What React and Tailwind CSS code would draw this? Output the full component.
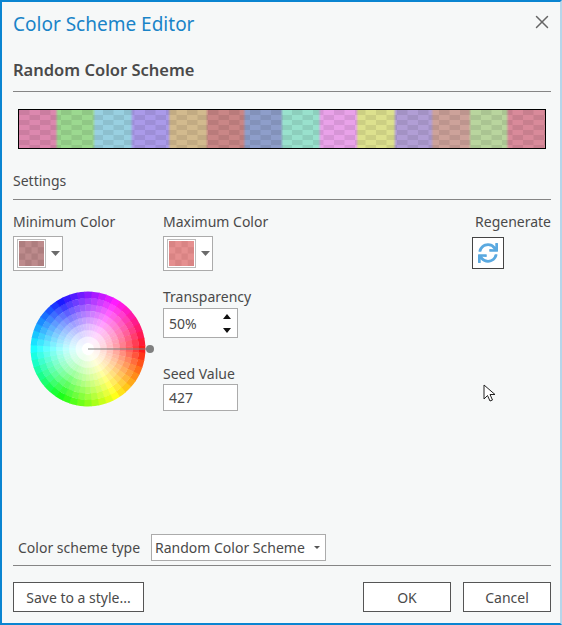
import React from 'react';
import { FaSync } from 'react-icons/fa';
import { X } from 'lucide-react';

const font = { fontFamily: '"Noto Sans", sans-serif' };

const stripColors = [
  '#dc88ae', '#9cd990', '#99d0e1', '#aa9ae9', '#d2ba8e', '#c98686', '#8e9eca',
  '#99e1cd', '#e9a2e9', '#dde18e', '#b19ed5', '#cda29a', '#b9d59e', '#d98a9a',
];

// ramp of colours under a 50% transparency checker
function ColorStrip() {
  const w = 526;
  const seg = w / stripColors.length;
  const stops = [];
  stripColors.forEach((c, i) => {
    stops.push(<stop key={`a${i}`} offset={(i * seg + (i ? 1.5 : 0)) / w} stopColor={c} />);
    stops.push(<stop key={`b${i}`} offset={((i + 1) * seg - 1.5) / w} stopColor={c} />);
  });
  return (
    <svg width="526" height="38" className="block">
      <defs>
        <linearGradient id="ramp">{stops}</linearGradient>
        <pattern id="check" width="21" height="10" patternUnits="userSpaceOnUse" x="0" y="0">
          <rect x="0" y="0" width="10.5" height="5" fill="rgba(0,0,0,0.08)" />
          <rect x="10.5" y="5" width="10.5" height="5" fill="rgba(0,0,0,0.08)" />
        </pattern>
      </defs>
      <rect width="526" height="38" fill="url(#ramp)" />
      <rect width="526" height="38" fill="url(#check)" />
    </svg>
  );
}

function hsl(h, s) {
  const l = 100 - s * 0.45;
  return `hsl(${h} 100% ${l}%)`;
}

function wedge(cx, cy, r0, r1, a0, a1) {
  const p = (r, a) => {
    const t = (a * Math.PI) / 180;
    return `${(cx + r * Math.cos(t)).toFixed(2)} ${(cy + r * Math.sin(t)).toFixed(2)}`;
  };
  return `M${p(r0, a0)} L${p(r1, a0)} A${r1} ${r1} 0 0 1 ${p(r1, a1)} L${p(r0, a1)} A${r0} ${r0} 0 0 0 ${p(r0, a0)}Z`;
}

function ColorWheel() {
  const rings = 8;
  const sectors = 48;
  const cells = [];
  for (let i = 0; i < rings; i++) {
    const r0 = 6 + i * 6.4;
    const r1 = r0 + 6.6;
    for (let j = 0; j < sectors; j++) {
      const a0 = (j * 360) / sectors - 3.75;
      const a1 = a0 + 360 / sectors + 0.6;
      const sat = Math.pow((i + 1) / rings, 1.25) * 100;
      cells.push(<path key={`${i}-${j}`} d={wedge(59, 59, r0, r1, a0, a1)} fill={hsl((j * 360) / sectors, sat)} />);
    }
  }
  return (
    <svg width="130" height="118" className="block">
      <circle cx="59" cy="59" r="7" fill="#fff" />
      {cells}
      <line x1="59" y1="59" x2="120" y2="59" stroke="#808080" strokeWidth="1.2" />
      <circle cx="121" cy="59" r="4" fill="#808080" />
    </svg>
  );
}

function SwatchButton({ a, b }) {
  return (
    <div className="flex items-center w-[50px] h-[35px] bg-white border border-[#ababab] pl-[3px]">
      <div className="border border-[#bcbcbc] p-px">
        <svg width="25" height="25" className="block">
          <rect width="25" height="25" fill={a} />
          {[0, 1, 2, 3].map((r) =>
            [0, 1, 2, 3].map((c) =>
              (r + c) % 2 === 0 ? <rect key={`${r}${c}`} x={c * 6.25} y={r * 6.25} width="6.25" height="6.25" fill={b} /> : null
            )
          )}
        </svg>
      </div>
      <svg width="9" height="5" className="ml-[5px]">
        <path d="M0 0H9L4.5 5Z" fill="#6b6b6b" />
      </svg>
    </div>
  );
}

function Button({ className, children }) {
  return (
    <button className={`h-[30px] pt-px bg-white border border-[#555] text-[14px] text-[#4a4a4a] ${className}`}>
      {children}
    </button>
  );
}

export default function App() {
  return (
    <div
      style={font}
      className="relative w-[562px] h-[625px] flex flex-col bg-[#f6f8f8] border-2 border-[#0a85d1] border-r-[#b6d6ea] pl-[11px] pr-[9px] text-[14px] leading-[19px] text-[#4a4a4a]"
    >
      <div className="flex items-center justify-between h-[44px]">
        <span className="text-[19px] text-[#1a84c8]">Color Scheme Editor</span>
        <X size={22} strokeWidth={1.6} className="text-[#666] mr-[-2px] mt-[-4px]" />
      </div>

      <div className="h-[46px] border-b border-[#858585] pt-[13px] text-[16.5px] leading-[22px] font-semibold">
        Random Color Scheme
      </div>

      <div className="ml-[5px] mt-[17px] w-[528px] border border-black">
        <ColorStrip />
      </div>

      <div className="mt-[22px] h-[29px] border-b border-[#858585]">Settings</div>

      <div className="flex mt-[12px]">
        <div className="w-[150px]">
          <div>Minimum Color</div>
          <div className="mt-[5px]">
            <SwatchButton a="#bd8b8c" b="#ae7e7f" />
          </div>
          <div className="mt-[19px] ml-[16px]">
            <ColorWheel />
          </div>
        </div>

        <div className="flex-1">
          <div>Maximum Color</div>
          <div className="mt-[5px]">
            <SwatchButton a="#e58f8f" b="#d98484" />
          </div>
          <div className="mt-[16px]">Transparency</div>
          <div className="mt-[2px] flex items-center justify-between w-[75px] h-[30px] bg-white border border-[#ababab] pl-[5px] pr-[5px]">
            <span>50%</span>
            <svg width="10" height="19">
              <path d="M1 5L5 0L9 5Z M1 14H9L5 19Z" fill="#111" />
            </svg>
          </div>
          <div className="mt-[26px]">Seed Value</div>
          <div className="mt-px flex items-center w-[75px] h-[27px] bg-white border border-[#ababab] pl-[5px]">427</div>
        </div>

        <div className="flex flex-col items-end">
          <div>Regenerate</div>
          <div className="mt-[6px] mr-[47px] flex items-center justify-center w-[32px] h-[32px] bg-white border border-[#444]">
            <FaSync size={20} className="text-[#5aa9e0]" />
          </div>
        </div>
      </div>

      <div className="mt-auto flex items-center h-[28px] pl-[5px]">
        <span className="w-[133px] pt-px">Color scheme type</span>
        <div className="flex items-center justify-between w-[175px] h-[27px] bg-white border border-[#ababab] pl-[3px] pr-[5px]">
          <span className="pt-px">Random Color Scheme</span>
          <svg width="6" height="3">
            <path d="M0 0H6L3 3Z" fill="#555" />
          </svg>
        </div>
      </div>
      <div className="mt-[4px] border-b border-[#858585]" />

      <div className="flex justify-between mt-[16px] mb-[11px]">
        <Button className="w-[131px]">Save to a style...</Button>
        <div className="flex gap-[12px]">
          <Button className="w-[88px]">OK</Button>
          <Button className="w-[88px]">Cancel</Button>
        </div>
      </div>

      {/* mouse pointer captured in the shot */}
      <svg width="14" height="20" className="absolute left-[481px] top-[382px]">
        <path d="M1 1V15L4.5 11.5L7 17L9.5 16L7 10.5H12Z" fill="#fff" stroke="#222" strokeWidth="1" />
      </svg>
    </div>
  );
}
